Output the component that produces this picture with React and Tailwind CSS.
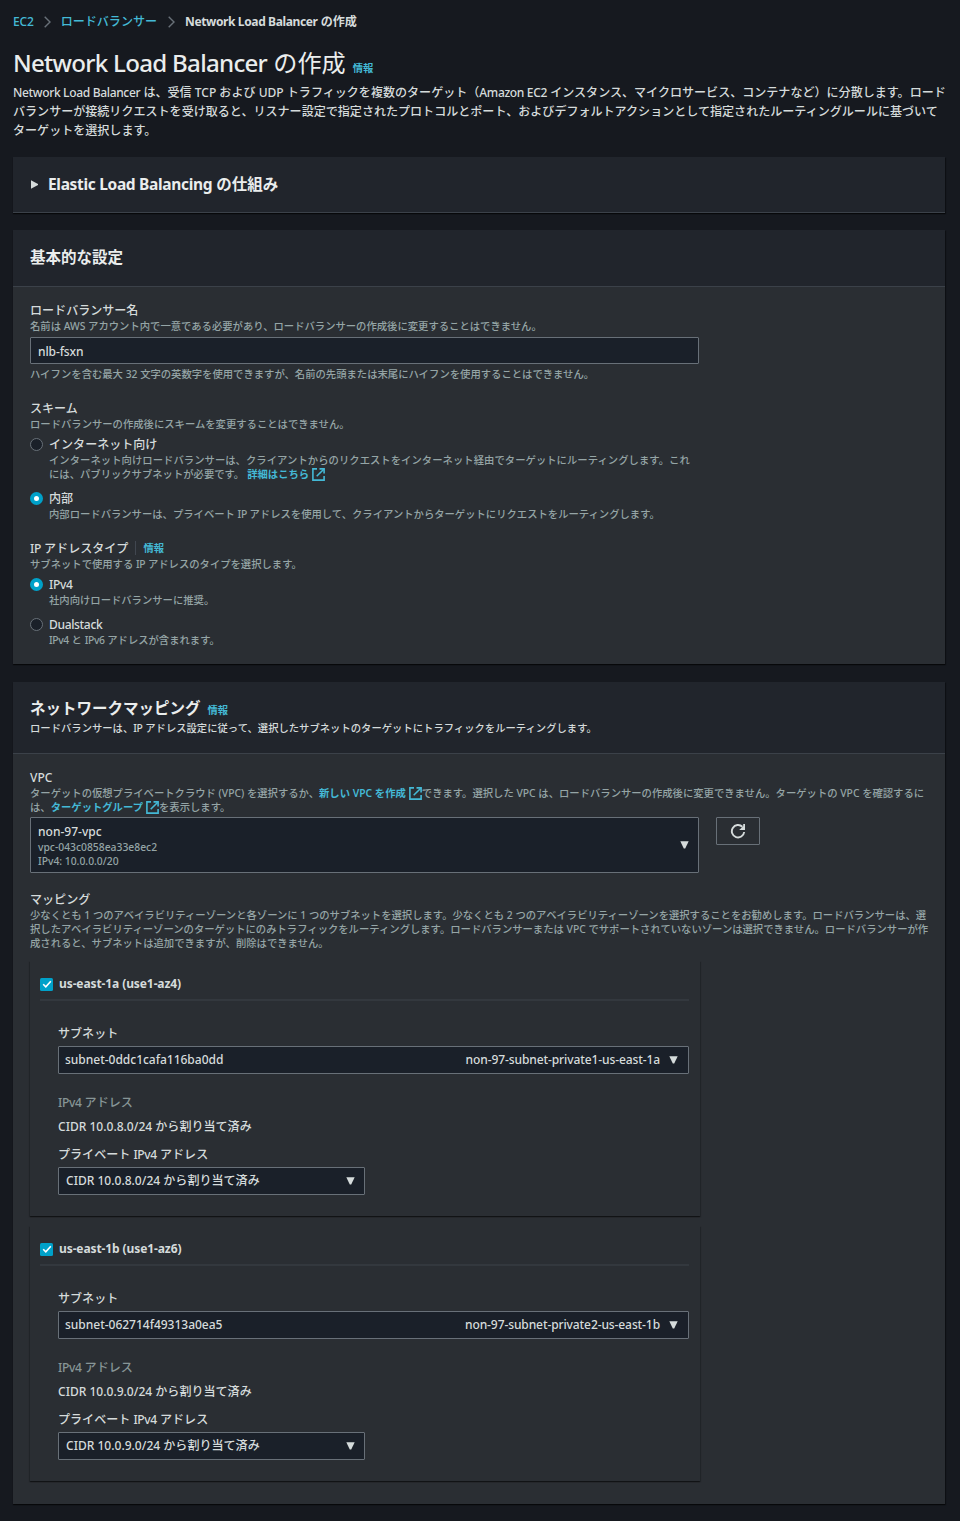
import React from 'react';

const zones = [
  {
    name: 'us-east-1a (use1-az4)',
    subnet: 'subnet-0ddc1cafa116ba0dd',
    subnetName: 'non-97-subnet-private1-us-east-1a',
    cidr: 'CIDR 10.0.8.0/24 から割り当て済み',
  },
  {
    name: 'us-east-1b (use1-az6)',
    subnet: 'subnet-062714f49313a0ea5',
    subnetName: 'non-97-subnet-private2-us-east-1b',
    cidr: 'CIDR 10.0.9.0/24 から割り当て済み',
  },
];

const Separator = () => (
  <svg className="w-[7px] h-3" viewBox="0 0 7 12" fill="none" stroke="#687078" strokeWidth="1.4">
    <path d="M0.7 0.7L6 6L0.7 11.3" />
  </svg>
);

const Caret = () => (
  <svg className="w-[9px] h-2 shrink-0" viewBox="0 0 9 8" fill="#d5dbdb">
    <path d="M0.3 0.3H8.7L5.2 7.6H3.8Z" />
  </svg>
);

const ExternalIcon = () => (
  <svg
    className="inline-block w-[13px] h-[13px] ml-[3px] align-[-3px]"
    viewBox="0 0 13 13"
    fill="none"
    stroke="#44b9d6"
    strokeWidth="1.6"
  >
    <path d="M5 0.9H0.9V12.1H12.1V8" />
    <path d="M7.5 0.9H12.1V5.5" />
    <path d="M12 1L4.7 8.3" />
  </svg>
);

const InfoLink = ({ className = '' }) => (
  <a className={`text-[10.33px] font-bold tracking-normal text-[#44b9d6] ${className}`}>情報</a>
);

const Label = ({ children }) => (
  <div className="flex items-center h-[19px] pt-px text-[12.05px] leading-[19px] text-[#d5dbdb]">{children}</div>
);

const Hint = ({ children, className = '' }) => (
  <div className={`text-[10.33px] leading-[14px] text-[#95a5a6] ${className}`}>{children}</div>
);

// Latin runs are set slightly tighter than the Japanese text around them
const Tight = ({ children }) => <span className="tracking-[-0.35px]">{children}</span>;

const Radio = ({ label, checked, children }) => (
  <div className="flex gap-[6px]">
    <span
      className={
        checked
          ? 'mt-[3px] w-[13px] h-[13px] shrink-0 rounded-full bg-white border-4 border-[#00a1c9]'
          : 'mt-[3px] w-[13px] h-[13px] shrink-0 rounded-full bg-[#1a2029] border border-[#687078]'
      }
    />
    <div>
      <div className="h-[18px] text-[12.05px] leading-[20px] text-[#d5dbdb]">{label}</div>
      <Hint>{children}</Hint>
    </div>
  </div>
);

const Card = ({ header, children }) => (
  <section className="bg-[#2a2e33] shadow-[0_1px_1px_rgba(0,0,0,0.5),1px_1px_1px_rgba(0,0,0,0.3)]">
    <div className="bg-[#21252c] border-b border-[#3b4149] px-[17px]">{header}</div>
    {children}
  </section>
);

const Zone = ({ zone }) => (
  <div className="w-[670px] h-[255px] pl-[10px] pr-[11px] pt-[14px] shadow-[0_1px_1px_rgba(0,0,0,0.4),1px_1px_1px_rgba(0,0,0,0.15),-1px_1px_1px_rgba(0,0,0,0.15)]">
    <div className="flex items-center gap-[6px] h-[18px]">
      <span className="flex items-center justify-center w-[13px] h-[13px] rounded-[1.5px] bg-[#00a1c9]">
        <svg className="w-[10px] h-[10px]" viewBox="0 0 10 10" fill="none" stroke="#fff" strokeWidth="1.6">
          <path d="M1.2 5.2L3.8 7.8L8.8 2.2" />
        </svg>
      </span>
      <span className="pt-px text-[12.05px] font-bold tracking-[-0.12px] text-[#d5dbdb]">{zone.name}</span>
    </div>
    <div className="mt-[6px] border-t-2 border-[#33383e]" />
    <div className="pl-[18px] pt-[22px]">
      <Label>サブネット</Label>
      <div className="mt-[4px] flex items-center h-7 pl-[6px] pr-[10px] rounded-[1px] border border-[#687078] bg-[#1a2029] text-[12.05px] text-[#d5dbdb]">
        <span className="flex-1 tracking-[-0.04px]">{zone.subnet}</span>
        <span className="mr-[9px] tracking-[-0.12px]">{zone.subnetName}</span>
        <Caret />
      </div>
      <div className="mt-[19px] text-[12.05px] leading-[19px] text-[#879596]"><Tight>IPv4</Tight> アドレス</div>
      <div className="mt-[5px] text-[12.05px] leading-[19px] text-[#d5dbdb]">{zone.cidr}</div>
      <div className="mt-[8px]">
        <Label><div>プライベート <Tight>IPv4</Tight> アドレス</div></Label>
      </div>
      <div className="mt-[4px] flex items-center justify-between w-[307px] h-7 pl-[7px] pr-[9px] rounded-[1px] border border-[#687078] bg-[#1a2029] text-[12.05px] text-[#d5dbdb]">
        <span>{zone.cidr}</span>
        <Caret />
      </div>
    </div>
  </div>
);

export default function App() {
  return (
    <div className="w-[960px] h-[1521px] pl-[13px] pr-[15px] overflow-hidden whitespace-nowrap bg-[#16191f] font-['Noto_Sans','Noto_Sans_CJK_JP',sans-serif] font-medium text-[#d5dbdb]">
      <nav className="flex items-center h-[18px] mt-[13px] text-[12.05px] text-[#44b9d6]">
        <a className="tracking-[-0.2px]">EC2</a>
        <span className="mx-[10px]"><Separator /></span>
        <a>ロードバランサー</a>
        <span className="ml-[11px] mr-[10px]"><Separator /></span>
        <span className="font-bold text-[#d5dbdb]">
          <span className="tracking-[-0.4px]">Network Load Balancer</span> の作成
        </span>
      </nav>

      <h1 className="mt-[15px] h-[36px] text-[24.1px] leading-[34px] font-normal text-[#eaeded]">
        <span className="font-medium tracking-[-0.72px]">Network Load Balancer</span> の作成
        <InfoLink className="ml-[7px]" />
      </h1>
      <p className="mt-px text-[12.05px] leading-[19px]">
        <Tight>Network Load Balancer</Tight> は、受信 TCP および UDP トラフィックを複数のターゲット（<Tight>Amazon EC2</Tight> インスタンス、マイクロサービス、コンテナなど）に分散します。ロード
        <br />
        バランサーが接続リクエストを受け取ると、リスナー設定で指定されたプロトコルとポート、およびデフォルトアクションとして指定されたルーティングルールに基づいて
        <br />
        ターゲットを選択します。
      </p>

      <div className="mt-[17px]">
        <Card
          header={
            <div className="flex items-center h-[55px] text-[15.5px] font-bold text-[#eaeded]">
              <svg className="ml-px mr-[10px] w-[7px] h-[9px]" viewBox="0 0 7 9" fill="#d5dbdb">
                <path d="M0 0.3L7 4V5L0 8.7Z" />
              </svg>
              <div>
                <span className="tracking-[-0.32px]">Elastic Load Balancing</span> の仕組み
              </div>
            </div>
          }
        />
      </div>

      <div className="mt-[17px]">
        <Card header={<h2 className="h-14 text-[15.5px] leading-[55px] font-bold text-[#eaeded]">基本的な設定</h2>}>
          <div className="px-[17px] pt-[13px] pb-[17px]">
            <Label>ロードバランサー名</Label>
            <Hint>名前は AWS アカウント内で一意である必要があり、ロードバランサーの作成後に変更することはできません。</Hint>
            <div className="mt-1 mb-[3px] w-[669px] h-[27px] pl-[7px] rounded-[1px] border border-[#687078] bg-[#1a2029] text-[12.05px] leading-[27px]">
              <span className="tracking-[-0.12px]">nlb-fsxn</span>
            </div>
            <Hint>
              ハイフンを含む最大 32 文字の英数字を使用できますが、名前の先頭または末尾にハイフンを使用することはできません。
            </Hint>

            <div className="mt-[17px]">
              <Label>スキーム</Label>
              <Hint>ロードバランサーの作成後にスキームを変更することはできません。</Hint>
              <div className="mt-1 flex flex-col gap-2">
                <Radio label="インターネット向け">
                  <span className="tracking-[0.04px]">
                    インターネット向けロードバランサーは、クライアントからのリクエストをインターネット経由でターゲットにルーティングします。これ
                  </span>
                  <br />
                  には、パブリックサブネットが必要です。
                  <a className="ml-[3px] font-semibold text-[#44b9d6]">詳細はこちら<ExternalIcon /></a>
                </Radio>
                <Radio label="内部" checked>
                  内部ロードバランサーは、プライベート <Tight>IP</Tight> アドレスを使用して、クライアントからターゲットにリクエストをルーティングします。
                </Radio>
              </div>
            </div>

            <div className="mt-[17px]">
              <Label>
                <div><Tight>IP</Tight> アドレスタイプ</div>
                <span className="w-px h-[14px] mx-[7px] bg-[#414750]" />
                <InfoLink />
              </Label>
              <Hint>サブネットで使用する <Tight>IP</Tight> アドレスのタイプを選択します。</Hint>
              <div className="mt-1 flex flex-col gap-2">
                <Radio label={<Tight>IPv4</Tight>} checked>社内向けロードバランサーに推奨。</Radio>
                <Radio label={<Tight>Dualstack</Tight>}>
                  <Tight>IPv4</Tight> と <Tight>IPv6</Tight> アドレスが含まれます。
                </Radio>
              </div>
            </div>
          </div>
        </Card>
      </div>

      <div className="mt-[18px]">
        <Card
          header={
            <div className="h-[71px] pt-[15px]">
              <h2 className="h-[23px] text-[15.5px] leading-[22px] font-bold text-[#eaeded]">
                ネットワークマッピング
                <InfoLink className="ml-[7px]" />
              </h2>
              <p className="text-[10.33px] leading-[16px]">
                ロードバランサーは、<Tight>IP</Tight> アドレス設定に従って、選択したサブネットのターゲットにトラフィックをルーティングします。
              </p>
            </div>
          }
        >
          <div className="px-[17px] pt-[13px] pb-[23px]">
            <Label>VPC</Label>
            <Hint>
              ターゲットの仮想プライベートクラウド (VPC) を選択するか、
              <a className="font-semibold text-[#44b9d6]">新しい VPC を作成<ExternalIcon /></a>
              できます。選択した VPC は、ロードバランサーの作成後に変更できません。ターゲットの VPC を確認するに
              <br />
              は、<a className="font-semibold text-[#44b9d6]">ターゲットグループ<ExternalIcon /></a>を表示します。
            </Hint>
            <div className="mt-[3px] flex items-start gap-[17px]">
              <div className="flex items-center justify-between w-[669px] h-14 pl-[7px] pr-[9px] rounded-[1px] border border-[#687078] bg-[#1a2029]">
                <div>
                  <div className="h-[18px] text-[12.05px] leading-[19px]">non-97-vpc</div>
                  <Hint>vpc-043c0858ea33e8ec2</Hint>
                  <Hint>IPv4: 10.0.0.0/20</Hint>
                </div>
                <Caret />
              </div>
              <button className="flex items-center justify-center w-11 h-7 rounded-[1px] border border-[#687078]">
                <svg className="w-4 h-4" viewBox="0 0 16 16" fill="none" stroke="#d5dbdb" strokeWidth="1.9">
                  <path d="M14.2 9A6.2 6.2 0 1 1 12.4 3.8" />
                  <path d="M15 1V7H9.2L11.8 4.6L13.2 3.2V1Z" fill="#d5dbdb" stroke="none" />
                </svg>
              </button>
            </div>

            <div className="mt-4">
              <Label>マッピング</Label>
              <Hint>
                少なくとも 1 つのアベイラビリティーゾーンと各ゾーンに 1 つのサブネットを選択します。少なくとも 2 つのアベイラビリティーゾーンを選択することをお勧めします。ロードバランサーは、選
                <br />
                択したアベイラビリティーゾーンのターゲットにのみトラフィックをルーティングします。ロードバランサーまたは VPC でサポートされていないゾーンは選択できません。ロードバランサーが作
                <br />
                成されると、サブネットは追加できますが、削除はできません。
              </Hint>
            </div>

            <div className="mt-[11px] flex flex-col gap-[10px]">
              {zones.map((zone) => (
                <Zone key={zone.name} zone={zone} />
              ))}
            </div>
          </div>
        </Card>
      </div>
    </div>
  );
}
